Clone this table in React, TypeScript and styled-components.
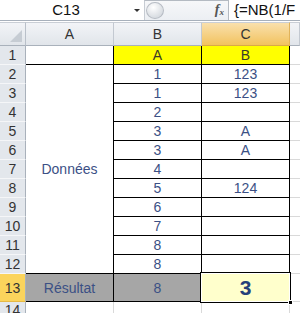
import styled, { createGlobalStyle } from 'styled-components';

const GlobalStyle = createGlobalStyle`
  html, body {
    margin: 0;
    padding: 0;
    background: #ffffff;
  }
  body {
    width: 300px;
    height: 313px;
    overflow: hidden;
    font-family: "Liberation Sans", Arial, sans-serif;
  }
`;

type Fill = 'none' | 'yellow' | 'gray' | 'result';
type Edge = 'black' | 'grid' | 'none';

const fills: Record<Fill, string> = {
  none: '#ffffff',
  yellow: '#ffff00',
  gray: '#a6a6a6',
  result: '#ffffcc',
};

const bValues = ['1', '1', '2', '3', '3', '4', '5', '6', '7', '8', '8'];
const cValues = ['123', '123', '', 'A', 'A', '', '124', '', '', '', ''];

export default function App() {
  return (
    <Page>
      <GlobalStyle />
      <FormulaBar>
        <NameBox>C13</NameBox>
        <DropArrow />
        <Middle>
          <Grip />
          <Fx>
            f<sub>x</sub>
          </Fx>
        </Middle>
        <Formula>{'{=NB(1/F'}</Formula>
      </FormulaBar>
      <Sheet>
        <Corner />
        <ColHead>A</ColHead>
        <ColHead>B</ColHead>
        <ColHead $active>C</ColHead>
        <ColHead />

        <RowHead>1</RowHead>
        <Cell $edge="black" />
        <Cell $edge="black" $fill="yellow" $dark>A</Cell>
        <Cell $edge="black" $fill="yellow" $dark>B</Cell>
        <Cell $edge="grid" $narrow />

        {bValues.map((b, i) => (
          <Row key={i}>
            <RowHead>{i + 2}</RowHead>
            {i === 0 && <Merged $edge="black">Données</Merged>}
            <Cell $edge="black">{b}</Cell>
            <Cell $edge="black">{cValues[i]}</Cell>
            <Cell $edge="grid" $narrow />
          </Row>
        ))}

        <RowHead $active>13</RowHead>
        <Cell $edge="black" $fill="gray">Résultat</Cell>
        <Cell $edge="black" $fill="gray">8</Cell>
        <ResultCell $edge="black" $fill="result">
          3
          <Selection>
            <Handle />
          </Selection>
        </ResultCell>
        <Cell $edge="grid" $narrow />

        <RowHead>14</RowHead>
        <Cell $edge="grid" />
        <Cell $edge="grid" />
        <Cell $edge="grid" />
        <Cell $edge="none" />
      </Sheet>
    </Page>
  );
}

function Row({ children }: { children: React.ReactNode }) {
  return <>{children}</>;
}

const Page = styled.div`
  width: 300px;
  height: 313px;
  overflow: hidden;
  background: #ffffff;
`;

const FormulaBar = styled.div`
  display: flex;
  height: 21px;
  border-bottom: 1px solid #a7b0bb;
  box-sizing: border-box;
  background: #ffffff;
`;

const NameBox = styled.div`
  width: 132px;
  line-height: 20px;
  text-align: center;
  font-size: 15px;
  color: #111111;
`;

const DropArrow = styled.div`
  width: 12px;
  position: relative;
  &::after {
    content: '';
    position: absolute;
    left: 2px;
    top: 9px;
    border-left: 3px solid transparent;
    border-right: 3px solid transparent;
    border-top: 3px solid #333333;
  }
`;

const Middle = styled.div`
  width: 84px;
  display: flex;
  align-items: center;
  background: linear-gradient(#f6f7f9, #eceff3);
  border-top: 1px solid #b4bac2;
  border-left: 1px solid #c7ccd3;
  box-sizing: border-box;
`;

const Grip = styled.div`
  width: 18px;
  height: 17px;
  margin-left: 1px;
  border-radius: 50%;
  border: 1px solid #b7bcc4;
  background: radial-gradient(circle at 40% 30%, #ffffff, #d9dde2 70%);
  box-sizing: border-box;
`;

const Fx = styled.div`
  margin-left: auto;
  margin-right: 4px;
  font-family: "Liberation Serif", "Times New Roman", serif;
  font-style: italic;
  font-weight: bold;
  font-size: 14px;
  color: #555555;
  line-height: 14px;
  sub {
    font-size: 9px;
    vertical-align: -1px;
  }
`;

const Formula = styled.div`
  flex: 1;
  padding-left: 5px;
  line-height: 20px;
  font-size: 15px;
  color: #111111;
  white-space: nowrap;
  overflow: hidden;
  border-left: 1px solid #b4bac2;
`;

const Sheet = styled.div`
  display: grid;
  grid-template-columns: 26px 88px 88px 88px 1fr;
  grid-template-rows: 24px repeat(12, 19px) 28px 1fr;
  height: 292px;
  margin-top: 1px;
  font-size: 14px;
`;

const Corner = styled.div`
  position: relative;
  background: linear-gradient(#f2f4f7, #e1e5ea);
  border-right: 1px solid #b9c0c9;
  border-bottom: 1px solid #a9b1bb;
  border-top: 1px solid #c9ced5;
  &::after {
    content: '';
    position: absolute;
    right: 3px;
    bottom: 3px;
    border-left: 12px solid transparent;
    border-bottom: 12px solid #c6ccd3;
  }
`;

const ColHead = styled.div<{ $active?: boolean }>`
  display: flex;
  align-items: center;
  justify-content: center;
  color: #333333;
  background: ${(p) =>
    p.$active
      ? 'linear-gradient(#f9e0ad, #f2c35f)'
      : 'linear-gradient(#f2f4f7, #e1e5ea)'};
  border-top: 1px solid #c9ced5;
  border-right: 1px solid ${(p) => (p.$active ? '#e1b35a' : '#c3c9d1')};
  border-bottom: 1px solid ${(p) => (p.$active ? '#d9a94a' : '#a9b1bb')};
`;

const RowHead = styled.div<{ $active?: boolean }>`
  display: flex;
  align-items: center;
  justify-content: center;
  color: #333333;
  background: ${(p) => (p.$active ? '#fbd45c' : '#e3e7ec')};
  border-right: 1px solid #a9b1bb;
  border-bottom: 1px solid ${(p) => (p.$active ? '#e6b945' : '#f5f6f8')};
`;

const edgeColor: Record<Edge, string> = {
  black: '#000000',
  grid: '#d9d9d9',
  none: 'transparent',
};

const Cell = styled.div<{ $edge: Edge; $fill?: Fill; $dark?: boolean; $narrow?: boolean }>`
  display: flex;
  align-items: center;
  justify-content: center;
  min-width: 0;
  overflow: hidden;
  white-space: nowrap;
  color: ${(p) => (p.$dark ? '#3a3a2a' : '#3b5085')};
  background: ${(p) => fills[p.$fill ?? 'none']};
  border-right: ${(p) => (p.$narrow ? 'none' : `1px solid ${edgeColor[p.$edge]}`)};
  border-bottom: 1px solid ${(p) => edgeColor[p.$edge]};
`;

const Merged = styled(Cell)`
  grid-row: span 11;
`;

const ResultCell = styled(Cell)`
  position: relative;
  overflow: visible;
  font-size: 21px;
  font-weight: bold;
  color: #25407a;
`;

const Selection = styled.div`
  position: absolute;
  left: -2px;
  top: -2px;
  right: -2px;
  bottom: -2px;
  border: 1px solid #000000;
  box-shadow: inset 0 0 0 1px #ffffff;
  pointer-events: none;
`;

const Handle = styled.div`
  position: absolute;
  right: -3px;
  bottom: -3px;
  width: 5px;
  height: 5px;
  background: #000000;
  border: 1px solid #ffffff;
  box-sizing: border-box;
`;
